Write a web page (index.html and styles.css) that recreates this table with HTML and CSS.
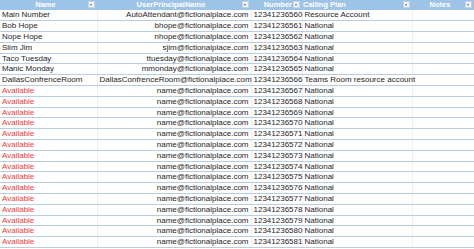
FILE: index.html
```html
<!DOCTYPE html>
<html lang="en">
<head>
    <meta charset="UTF-8">
    <title>Phone Numbers</title>
    <link rel="stylesheet" href="styles.css">
</head>
<body>
    <table class="sheet">
        <colgroup>
            <col class="c-name">
            <col class="c-upn">
            <col class="c-num">
            <col class="c-plan">
            <col class="c-notes">
        </colgroup>
        <thead>
            <tr>
                <th class="center">Name <span class="dd"></span></th>
                <th class="center">UserPrincipalName <span class="dd"></span></th>
                <th class="right">Number <span class="dd"></span></th>
                <th class="left">Calling Plan <span class="dd"></span></th>
                <th class="center">Notes <span class="dd"></span></th>
            </tr>
        </thead>
        <tbody id="rows">
            <tr><td>Main Number</td><td class="r">AutoAttendant@fictionalplace.com</td><td class="r">12341236560</td><td>Resource Account</td><td></td></tr>
            <tr><td>Bob Hope</td><td class="r">bhope@fictionalplace.com</td><td class="r">12341236561</td><td>National</td><td></td></tr>
            <tr><td>Nope Hope</td><td class="r">nhope@fictionalplace.com</td><td class="r">12341236562</td><td>National</td><td></td></tr>
            <tr><td>Slim Jim</td><td class="r">sjim@fictionalplace.com</td><td class="r">12341236563</td><td>National</td><td></td></tr>
            <tr><td>Taco Tuesday</td><td class="r">ttuesday@fictionalplace.com</td><td class="r">12341236564</td><td>National</td><td></td></tr>
            <tr><td>Manic Monday</td><td class="r">mmonday@fictionalplace.com</td><td class="r">12341236565</td><td>National</td><td></td></tr>
            <tr><td>DallasConfrenceRoom</td><td class="r">DallasConfrenceRoom@fictionalplace.com</td><td class="r">12341236566</td><td>Teams Room resource account</td><td></td></tr>
        </tbody>
    </table>

    <script>
        // fill the free numbers
        var body = document.getElementById('rows');
        for (var n = 567; n <= 581; n++) {
            var tr = document.createElement('tr');
            tr.innerHTML = '<td class="avail">Available</td>' +
                '<td class="r">name@fictionalplace.com</td>' +
                '<td class="r">12341236' + n + '</td>' +
                '<td>National</td><td></td>';
            body.appendChild(tr);
        }
    </script>
</body>
</html>
```

FILE: styles.css
```css
* {
    margin: 0;
    padding: 0;
    box-sizing: border-box;
}

body {
    background: #fff;
    font-family: 'Liberation Sans', Arial, sans-serif;
    font-size: 8px;
    color: #1e1e1e;
    overflow: hidden;
}

.sheet {
    width: 474px;
    border-collapse: collapse;
    table-layout: fixed;
}

.c-name { width: 97px; }
.c-upn { width: 154px; }
.c-num { width: 51px; }
.c-plan { width: 110px; }
.c-notes { width: 62px; }

/* Header row */
.sheet th {
    height: 10px;
    background: #9dc3e6;
    color: #fff;
    font-weight: bold;
    font-size: 7.5px;
    line-height: 10px;
    white-space: nowrap;
    padding: 0 8px 0 2px;
    position: relative;
    overflow: hidden;
}

.sheet th.center { text-align: center; }
.sheet th.right { text-align: right; padding-right: 10px; }
.sheet th.left { text-align: left; padding-left: 1px; }

.dd {
    position: absolute;
    right: 2px;
    top: 1px;
    width: 7px;
    height: 7px;
    background: #eef3f8;
    border: 1px solid #c3d2e2;
}

.dd::after {
    content: '';
    position: absolute;
    left: 1px;
    top: 2px;
    border-left: 1.5px solid transparent;
    border-right: 1.5px solid transparent;
    border-top: 2px solid #6b6b6b;
}

/* Body rows */
.sheet td {
    height: 10.8px;
    line-height: 9.8px;
    white-space: nowrap;
    overflow: visible;
    padding: 0 2px;
    border-bottom: 1px solid #b7cde4;
    border-right: 1px solid #eceff3;
}

.sheet td.r { text-align: right; }

.sheet td.avail { color: #f23b3b; }
```
